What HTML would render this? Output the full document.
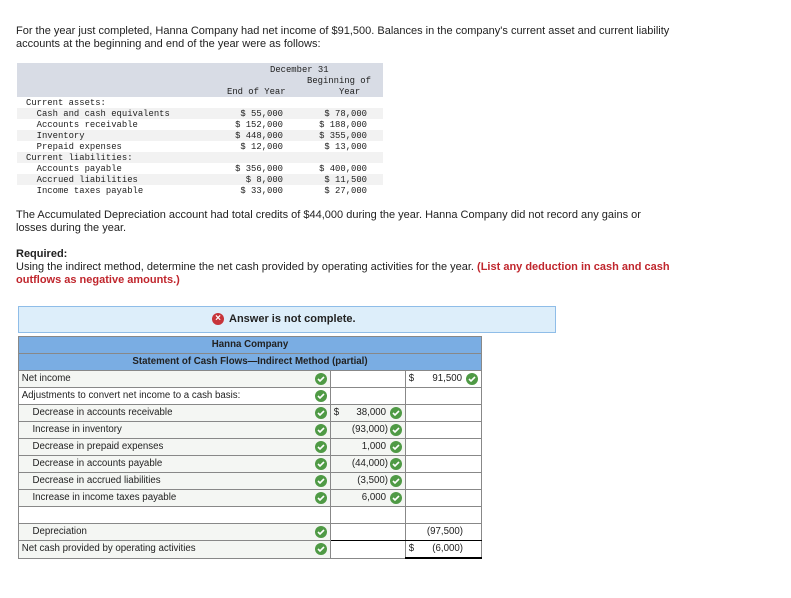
<!DOCTYPE html>
<html><head><style>
body{margin:0;width:791px;height:598px;background:#fff;font-family:"Liberation Sans",sans-serif;color:#222;position:relative;overflow:hidden}
.p{position:absolute;left:16px;font-size:11px;line-height:13px;margin:0}
.mono{font-family:"Liberation Mono",monospace;font-size:8.9px;position:absolute;white-space:pre;line-height:11px}
.ck{display:inline-block;width:12px;height:12px;border-radius:50%;background:#4f9a45;position:absolute}
.ck svg{position:absolute;left:2px;top:2px}
table{border-collapse:collapse;position:absolute;left:18px;top:336px;font-size:9.7px}
td{border:1px solid #888;height:16px;padding:0;position:relative;line-height:12px}
tr.g td{background:#f4f6f3}
td span{top:2px !important}
</style></head><body>
<p class="p" style="top:25px">For the year just completed, Hanna Company had net income of $91,500. Balances in the company's current asset and current liability<br>accounts at the beginning and end of the year were as follows:</p>

<div style="position:absolute;left:17px;top:63px;width:366px;height:34px;background:#d8dce5"></div>
<div style="position:absolute;left:17px;top:108px;width:366px;height:11px;background:#f2f2f2"></div>
<div style="position:absolute;left:17px;top:130px;width:366px;height:11px;background:#f2f2f2"></div>
<div style="position:absolute;left:17px;top:152px;width:366px;height:11px;background:#f2f2f2"></div>
<div style="position:absolute;left:17px;top:174px;width:366px;height:11px;background:#f2f2f2"></div>
<div class="mono" style="left:270px;top:65px">December 31</div>
<div class="mono" style="left:307px;top:76px;text-align:center">Beginning of
    Year</div>
<div class="mono" style="left:227px;top:87px">End of Year</div>
<div class="mono" style="left:26px;top:98px">Current assets:
  Cash and cash equivalents
  Accounts receivable
  Inventory
  Prepaid expenses
Current liabilities:
  Accounts payable
  Accrued liabilities
  Income taxes payable</div>
<div class="mono" style="left:229px;top:109px;text-align:right;width:54px">$ 55,000
$ 152,000
$ 448,000
$ 12,000

$ 356,000
$ 8,000
$ 33,000</div>
<div class="mono" style="left:311px;top:109px;text-align:right;width:56px">$ 78,000
$ 188,000
$ 355,000
$ 13,000

$ 400,000
$ 11,500
$ 27,000</div>

<p class="p" style="top:209px">The Accumulated Depreciation account had total credits of $44,000 during the year. Hanna Company did not record any gains or<br>losses during the year.</p>
<p class="p" style="top:248px"><b>Required:</b><br>Using the indirect method, determine the net cash provided by operating activities for the year. <b style="color:#c0262d">(List any deduction in cash and cash<br>outflows as negative amounts.)</b></p>

<div style="position:absolute;left:18px;top:306px;width:536px;height:25px;background:#ddeefa;border:1px solid #8fbde8"></div>
<div style="position:absolute;left:212px;top:313px;width:12px;height:12px;border-radius:50%;background:#c7343a;color:#fff;font-size:10px;line-height:12px;text-align:center;font-weight:bold">×</div>
<div style="position:absolute;left:229px;top:313px;font-size:11px;font-weight:bold">Answer is not complete.</div>

<table>
<tr><td colspan="3" style="background:#7aade3;text-align:center;font-weight:bold;height:16px">Hanna Company</td></tr>
<tr><td colspan="3" style="background:#7aade3;text-align:center;font-weight:bold;height:16px">Statement of Cash Flows—Indirect Method (partial)</td></tr>
<tr class="g"><td style="width:311px">&nbsp;Net income<span class="ck" style="left:296px"><svg width="8" height="8"><path d="M1 4l2 2 4-4" stroke="#fff" stroke-width="1.6" fill="none"/></svg></span></td><td style="width:74px;background:#fff"></td><td style="width:75px;background:#fff">&nbsp;$<span style="position:absolute;right:19px">91,500</span><span class="ck" style="left:60px"><svg width="8" height="8"><path d="M1 4l2 2 4-4" stroke="#fff" stroke-width="1.6" fill="none"/></svg></span></td></tr>
<tr><td>&nbsp;Adjustments to convert net income to a cash basis:<span class="ck" style="left:296px"><svg width="8" height="8"><path d="M1 4l2 2 4-4" stroke="#fff" stroke-width="1.6" fill="none"/></svg></span></td><td></td><td></td></tr>
<tr class="g"><td>&nbsp;&nbsp;&nbsp;&nbsp;&nbsp;Decrease in accounts receivable<span class="ck" style="left:296px"><svg width="8" height="8"><path d="M1 4l2 2 4-4" stroke="#fff" stroke-width="1.6" fill="none"/></svg></span></td><td>&nbsp;$<span style="position:absolute;right:19px">38,000</span><span class="ck" style="left:59px"><svg width="8" height="8"><path d="M1 4l2 2 4-4" stroke="#fff" stroke-width="1.6" fill="none"/></svg></span></td><td style="background:#fff"></td></tr>
<tr class="g"><td>&nbsp;&nbsp;&nbsp;&nbsp;&nbsp;Increase in inventory<span class="ck" style="left:296px"><svg width="8" height="8"><path d="M1 4l2 2 4-4" stroke="#fff" stroke-width="1.6" fill="none"/></svg></span></td><td><span style="position:absolute;right:17px">(93,000)</span><span class="ck" style="left:59px"><svg width="8" height="8"><path d="M1 4l2 2 4-4" stroke="#fff" stroke-width="1.6" fill="none"/></svg></span></td><td style="background:#fff"></td></tr>
<tr class="g"><td>&nbsp;&nbsp;&nbsp;&nbsp;&nbsp;Decrease in prepaid expenses<span class="ck" style="left:296px"><svg width="8" height="8"><path d="M1 4l2 2 4-4" stroke="#fff" stroke-width="1.6" fill="none"/></svg></span></td><td><span style="position:absolute;right:19px">1,000</span><span class="ck" style="left:59px"><svg width="8" height="8"><path d="M1 4l2 2 4-4" stroke="#fff" stroke-width="1.6" fill="none"/></svg></span></td><td style="background:#fff"></td></tr>
<tr class="g"><td>&nbsp;&nbsp;&nbsp;&nbsp;&nbsp;Decrease in accounts payable<span class="ck" style="left:296px"><svg width="8" height="8"><path d="M1 4l2 2 4-4" stroke="#fff" stroke-width="1.6" fill="none"/></svg></span></td><td><span style="position:absolute;right:17px">(44,000)</span><span class="ck" style="left:59px"><svg width="8" height="8"><path d="M1 4l2 2 4-4" stroke="#fff" stroke-width="1.6" fill="none"/></svg></span></td><td style="background:#fff"></td></tr>
<tr class="g"><td>&nbsp;&nbsp;&nbsp;&nbsp;&nbsp;Decrease in accrued liabilities<span class="ck" style="left:296px"><svg width="8" height="8"><path d="M1 4l2 2 4-4" stroke="#fff" stroke-width="1.6" fill="none"/></svg></span></td><td><span style="position:absolute;right:17px">(3,500)</span><span class="ck" style="left:59px"><svg width="8" height="8"><path d="M1 4l2 2 4-4" stroke="#fff" stroke-width="1.6" fill="none"/></svg></span></td><td style="background:#fff"></td></tr>
<tr class="g"><td>&nbsp;&nbsp;&nbsp;&nbsp;&nbsp;Increase in income taxes payable<span class="ck" style="left:296px"><svg width="8" height="8"><path d="M1 4l2 2 4-4" stroke="#fff" stroke-width="1.6" fill="none"/></svg></span></td><td><span style="position:absolute;right:19px">6,000</span><span class="ck" style="left:59px"><svg width="8" height="8"><path d="M1 4l2 2 4-4" stroke="#fff" stroke-width="1.6" fill="none"/></svg></span></td><td style="background:#fff"></td></tr>
<tr><td></td><td></td><td></td></tr>
<tr class="g"><td>&nbsp;&nbsp;&nbsp;&nbsp;&nbsp;Depreciation<span class="ck" style="left:296px"><svg width="8" height="8"><path d="M1 4l2 2 4-4" stroke="#fff" stroke-width="1.6" fill="none"/></svg></span></td><td style="background:#fff;border-bottom:1.5px solid #000"></td><td style="background:#fff;border-bottom:1.5px solid #000"><span style="position:absolute;right:18px">(97,500)</span></td></tr>
<tr class="g"><td>&nbsp;Net cash provided by operating activities<span class="ck" style="left:296px"><svg width="8" height="8"><path d="M1 4l2 2 4-4" stroke="#fff" stroke-width="1.6" fill="none"/></svg></span></td><td style="background:#fff"></td><td style="background:#fff;border-bottom:2.5px solid #000">&nbsp;$<span style="position:absolute;right:18px">(6,000)</span></td></tr>
</table>
</body></html>
